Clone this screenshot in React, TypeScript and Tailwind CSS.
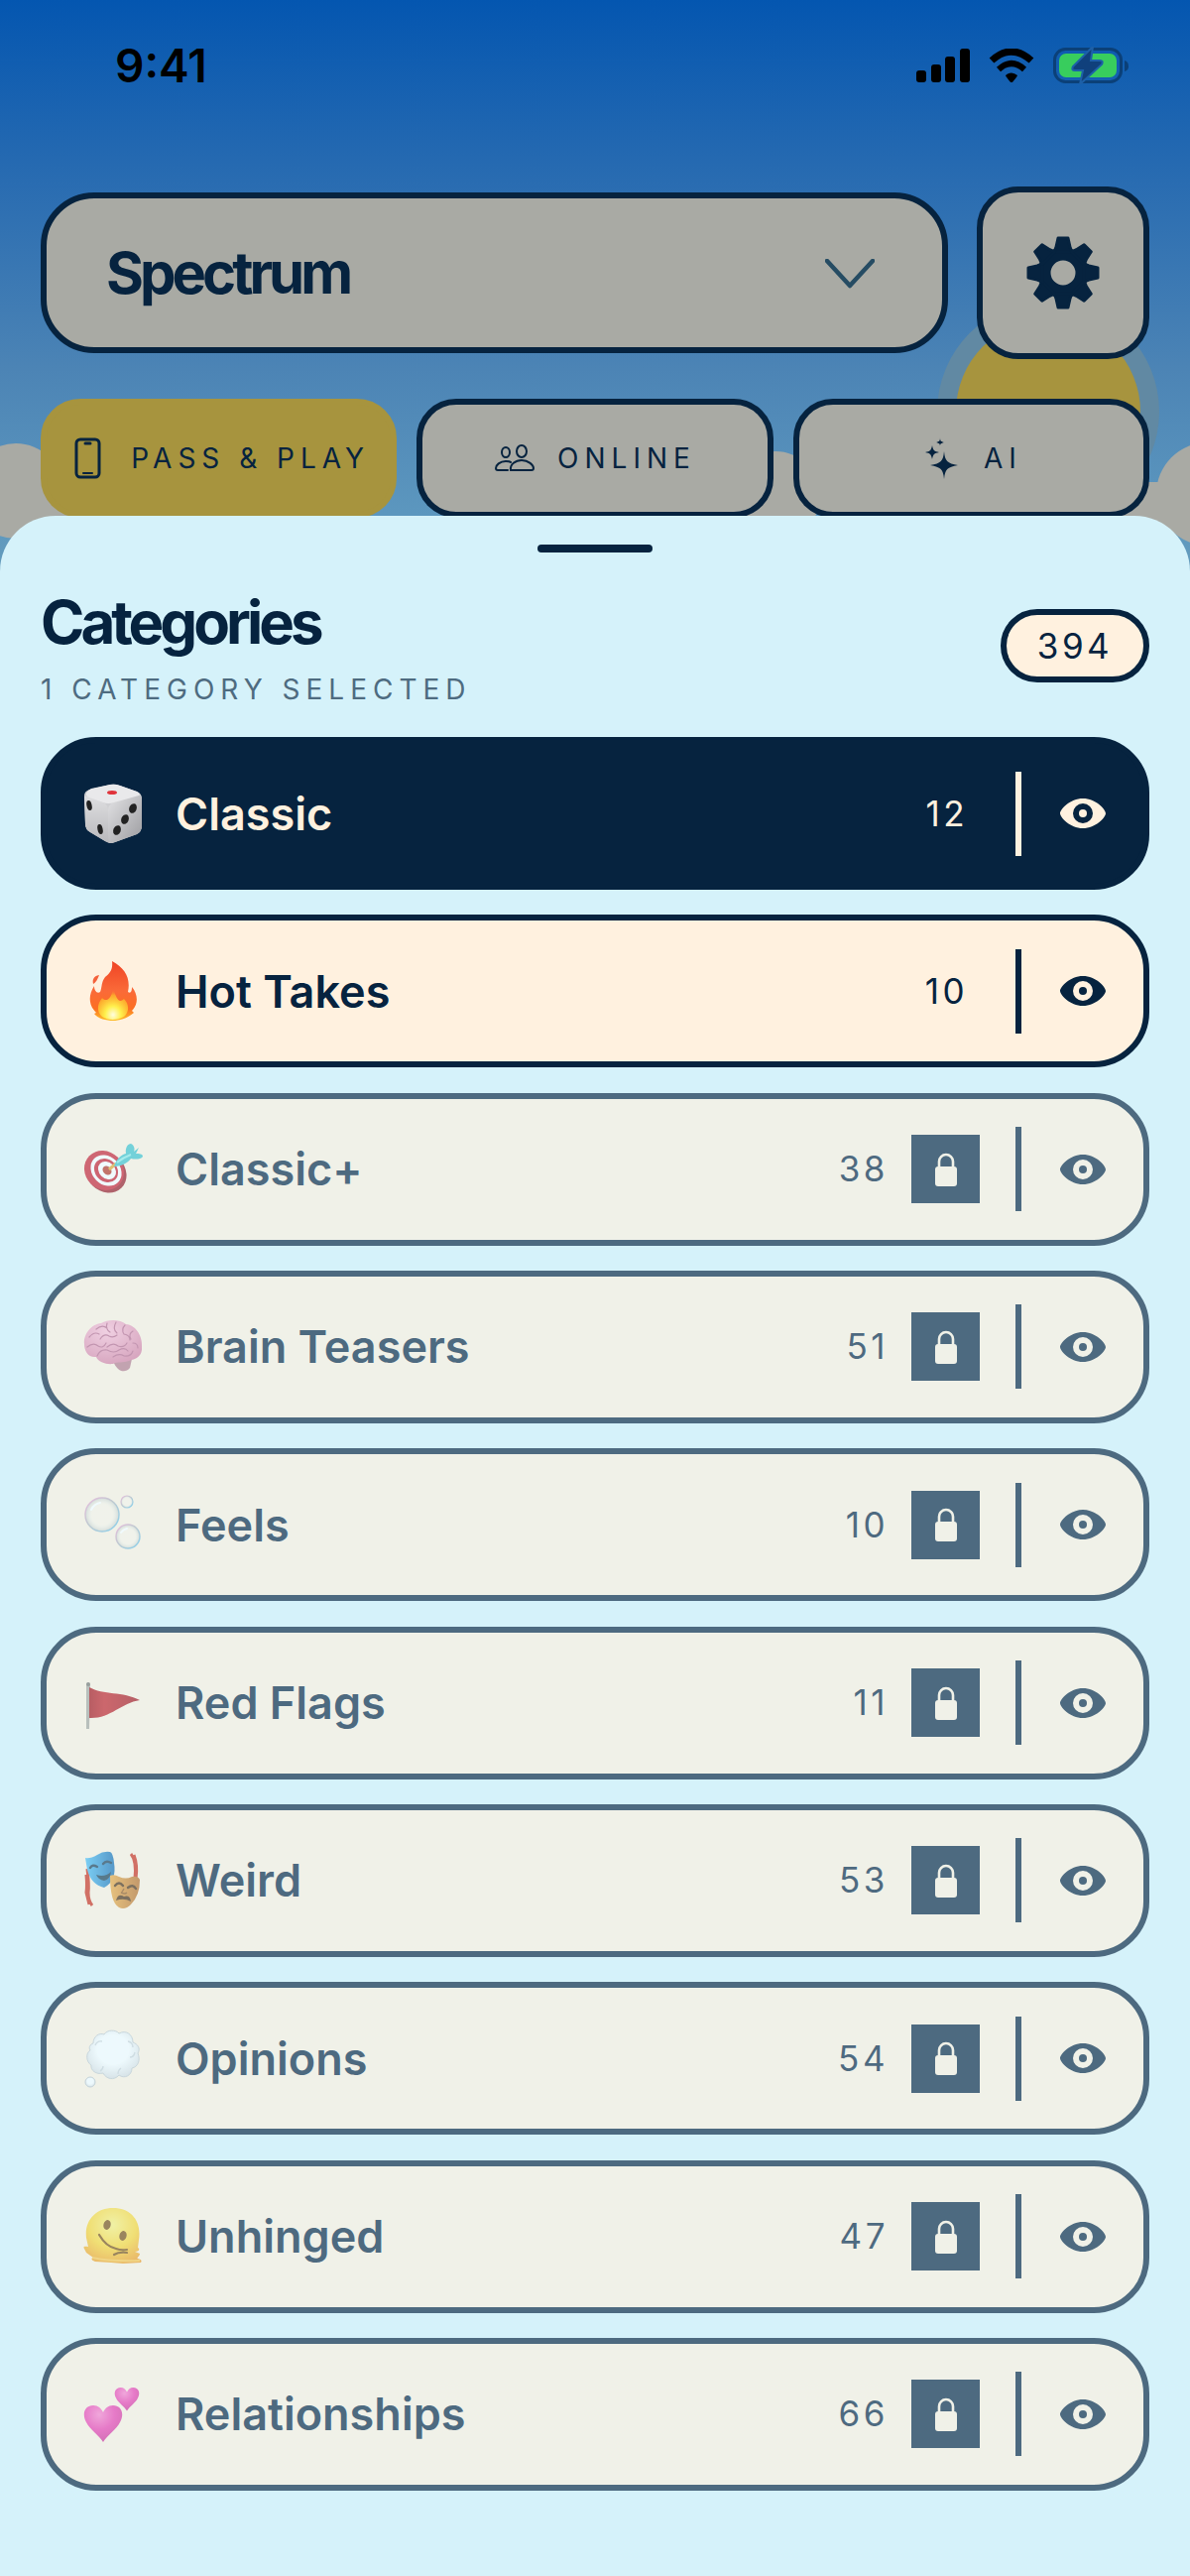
import React, { useState } from "react";

const CATEGORIES = [
  { name: "Classic", count: 12, locked: false, emoji: "dice" },
  { name: "Hot Takes", count: 10, locked: false, emoji: "fire" },
  { name: "Classic+", count: 38, locked: true, emoji: "target" },
  { name: "Brain Teasers", count: 51, locked: true, emoji: "brain" },
  { name: "Feels", count: 10, locked: true, emoji: "bubbles" },
  { name: "Red Flags", count: 11, locked: true, emoji: "flag" },
  { name: "Weird", count: 53, locked: true, emoji: "masks" },
  { name: "Opinions", count: 54, locked: true, emoji: "thought" },
  { name: "Unhinged", count: 47, locked: true, emoji: "melting" },
  { name: "Relationships", count: 66, locked: true, emoji: "hearts" },
];

const HEART =
  "M0 15 C-4 8 -14 2 -17 -5 C-22 -14 -18 -22 -10 -22 C-5 -22 -2 -19 0 -15 C2 -19 5 -22 10 -22 C18 -22 22 -14 17 -5 C14 2 4 8 0 15 Z";

const emojis = {
  dice: (
    <>
      <defs>
        <linearGradient id="diceL" x1="0" y1="0" x2="0" y2="1">
          <stop offset="0" stopColor="#dedee0" />
          <stop offset="1" stopColor="#b9b9bc" />
        </linearGradient>
        <linearGradient id="diceR" x1="0" y1="0" x2="1" y2="1">
          <stop offset="0" stopColor="#e2e2e4" />
          <stop offset="1" stopColor="#9c9ca0" />
        </linearGradient>
      </defs>
      <path d="M1 12 Q1 8 6 6 L27 1 Q32 0 37 2 L54 8 Q59 10 59 15 L59 43 Q59 48 54 51 L32 59 Q27 61 22 58 L7 49 Q2 46 2 41 Z" fill="#cfcfd2" />
      <path d="M1 13 Q3 12 7 14 L20 19 Q25 21 25 27 L26 60 Q24 59 22 58 L7 49 Q2 46 2 41 Z" fill="url(#diceL)" />
      <path d="M25 27 Q25 21 31 19 L52 12 Q58 11 59 15 L59 43 Q59 48 54 51 L32 59 Q28 61 26 60 Z" fill="url(#diceR)" />
      <path d="M3 10 Q4 7 8 5 L27 1 Q32 0 37 2 L54 8 Q58 10 56 12 L31 19 Q25 21 20 19 L6 14 Q2 12 3 10 Z" fill="#e9e9eb" />
      <ellipse cx="29" cy="9" rx="5" ry="2" fill="#e0333b" />
      <ellipse cx="6" cy="22" rx="2.6" ry="5" transform="rotate(-12 6 22)" fill="#222" />
      <ellipse cx="17" cy="46" rx="2.6" ry="5" transform="rotate(-12 17 46)" fill="#222" />
      <ellipse cx="50" cy="25" rx="3.7" ry="5" transform="rotate(22 50 25)" fill="#222" />
      <ellipse cx="42" cy="36" rx="3.7" ry="5" transform="rotate(22 42 36)" fill="#222" />
      <ellipse cx="34" cy="47" rx="3.7" ry="5" transform="rotate(22 34 47)" fill="#222" />
    </>
  ),
  fire: (
    <>
      <defs>
        <linearGradient id="fireA" x1="0" y1="0" x2="0" y2="1">
          <stop offset="0" stopColor="#ef4426" />
          <stop offset="0.5" stopColor="#fa6a38" />
          <stop offset="0.8" stopColor="#fc6f22" />
          <stop offset="1" stopColor="#fdc02a" />
        </linearGradient>
        <radialGradient id="fireB" cx="0.5" cy="0.85" r="0.75">
          <stop offset="0" stopColor="#fffde0" />
          <stop offset="0.35" stopColor="#fff04d" />
          <stop offset="0.8" stopColor="#fdb52c" stopOpacity="0.8" />
          <stop offset="1" stopColor="#fb7d30" stopOpacity="0" />
        </radialGradient>
      </defs>
      <path d="M29 0 C42 7 48 17 45 31 C48 33 49 30 49 26 C55 33 56 43 49 50 L51 52 C44 58 36 60 30 60 C23 60 15 58 11 53 L13 52 C5 44 5 34 11 25 C11 30 14 33 17 31 C19 26 18 21 22 16 C27 12 30 8 29 0 Z" fill="url(#fireA)" />
      <path d="M16 14 C14 19 13 21 10 23 C9 19 10 15 16 14 Z" fill="#f4613a" />
      <path d="M30 26 C33 38 36 43 41 38 C47 44 46 52 41 56 C34 60 25 60 19 56 C13 51 14 43 19 37 C23 42 29 38 30 26 Z" fill="url(#fireB)" />
    </>
  ),
  target: (
    <>
      <ellipse cx="23" cy="33" rx="22" ry="19" fill="#9c1620" transform="rotate(45 23 33)" />
      <ellipse cx="21" cy="31" rx="21" ry="19" fill="#cb1c2c" transform="rotate(45 21 31)" />
      <ellipse cx="23" cy="31" rx="17" ry="14" fill="#fff" transform="rotate(45 23 31)" />
      <ellipse cx="23" cy="31" rx="13" ry="11" fill="#c91b2b" transform="rotate(45 23 31)" />
      <ellipse cx="24" cy="31" rx="10" ry="8" fill="#fff" transform="rotate(45 24 31)" />
      <ellipse cx="24" cy="31" rx="5" ry="4" fill="#b8321f" transform="rotate(45 24 31)" />
      <path d="M26 30 L33 24" stroke="#e7a32b" strokeWidth="3" />
      <path d="M31 27 C33 20 38 15 43 14 C42 8 45 4 48 4 C52 6 52 10 51 12 L56 8 L53 14 C56 14 60 14 60 17 C58 20 52 20 48 19 C45 23 39 27 31 27 Z" fill="#3fc0c8" />
      <path d="M34 23 Q40 18 48 15" stroke="#8ce8e6" strokeWidth="2" fill="none" />
    </>
  ),
  brain: (
    <>
      <defs>
        <radialGradient id="brainA" cx="0.4" cy="0.25" r="0.8">
          <stop offset="0" stopColor="#ffbfd6" />
          <stop offset="1" stopColor="#d87c9f" />
        </radialGradient>
      </defs>
      <path d="M30 44 C34 55 42 57 47 51 L49 42 Z" fill="#b8798a" />
      <path d="M1 27 C0 17 8 7 18 6 C25 2 37 2 43 7 C53 8 60 19 59 30 C60 38 53 43 48 43 C43 46 36 45 32 46 C28 49 15 46 13 40 C5 41 1 34 1 27 Z" fill="url(#brainA)" />
      <path d="M6 20 q5 -6 10 -3 M13 12 q6 -5 11 -1 M24 6 q-2 6 3 9 M33 5 q-4 7 1 11 M42 8 q-4 4 -1 9 q6 1 6 6 M50 14 q-5 3 -2 8 M17 22 q4 -6 9 -3 q4 2 8 -1 M4 30 q6 -5 11 -1 q5 3 8 -3 M24 30 q6 -5 11 -1 q6 2 9 -3 M14 39 q3 -7 10 -6 q7 4 12 0 q6 -3 9 1 M30 40 q6 -4 11 -1 q7 1 9 -5 M50 26 q5 0 5 5" stroke="#b9658a" strokeWidth="1.2" fill="none" strokeLinecap="round" />
    </>
  ),
  bubbles: (
    <>
      <defs>
        <radialGradient id="bubble">
          <stop offset="0.6" stopColor="#ffffff" stopOpacity="0.15" />
          <stop offset="1" stopColor="#94a5a8" stopOpacity="0.45" />
        </radialGradient>
        <linearGradient id="bubbleRim" x1="0" y1="0" x2="1" y2="1">
          <stop offset="0" stopColor="#f3a0cf" />
          <stop offset="0.45" stopColor="#b5b4bb" />
          <stop offset="1" stopColor="#5cbfe8" />
        </linearGradient>
      </defs>
      <circle cx="19" cy="20" r="17" fill="url(#bubble)" stroke="url(#bubbleRim)" strokeWidth="1.4" />
      <circle cx="45" cy="42" r="12" fill="url(#bubble)" stroke="url(#bubbleRim)" strokeWidth="1.4" />
      <circle cx="44" cy="7" r="6" fill="url(#bubble)" stroke="url(#bubbleRim)" strokeWidth="1.2" />
      <path d="M8 15 Q11 9 17 8" stroke="#fff" strokeWidth="2" fill="none" strokeLinecap="round" />
      <path d="M38 38 Q40 35 44 34" stroke="#fff" strokeWidth="2" fill="none" strokeLinecap="round" />
    </>
  ),
  flag: (
    <>
      <defs>
        <linearGradient id="flagA" x1="0" x2="1">
          <stop offset="0" stopColor="#a80f14" />
          <stop offset="0.3" stopColor="#c81e22" />
          <stop offset="1" stopColor="#a51218" />
        </linearGradient>
      </defs>
      <path d="M3 11 Q4 8 7 11 L6 56 L3 56 Z" fill="#a9a59b" />
      <circle cx="5" cy="11" r="2" fill="#77736c" />
      <path d="M6 14 C20 22 40 18 57 27 C38 30 27 46 6 45 Z" fill="url(#flagA)" />
    </>
  ),
  masks: (
    <>
      <defs>
        <linearGradient id="maskA" x1="0" x2="1">
          <stop offset="0" stopColor="#4cbcf2" />
          <stop offset="1" stopColor="#1469ae" />
        </linearGradient>
        <linearGradient id="maskB" x1="0" x2="1">
          <stop offset="0" stopColor="#f0a83c" />
          <stop offset="1" stopColor="#b9691f" />
        </linearGradient>
      </defs>
      <path d="M4 18 Q6 34 5 42 Q5 50 9 55 M3 24 Q4 36 3 42 L6 54 M48 3 Q54 10 52 28 M51 4 Q55 14 53 28" stroke="#cf2c17" strokeWidth="3" fill="none" />
      <path d="M2 7 Q7 8 14 4 Q20 0 27 1 Q30 2 31 12 Q34 30 21 37 Q8 34 4 19 Z" fill="url(#maskA)" />
      <path d="M7 17 Q9 13 14 16 M20 13 Q23 9 28 12" stroke="#173a54" strokeWidth="2.4" fill="none" strokeLinecap="round" />
      <path d="M13 24 Q22 27 28 21 Q27 29 21 30 Q15 29 13 24 Z" fill="#16394f" />
      <path d="M27 25 Q31 23 36 26 Q43 29 49 26 Q55 25 57 29 Q57 45 48 54 Q42 60 36 57 Q27 52 27 25 Z" fill="url(#maskB)" />
      <path d="M32 35 Q36 30 40 35 M45 37 Q50 33 53 38" stroke="#4d2c0d" strokeWidth="2.4" fill="none" strokeLinecap="round" />
      <path d="M33 50 Q35 42 41 46 Q47 44 48 51 Q41 47 33 50 Z" fill="#4d2c0d" />
      <path d="M41 38 q-2 4 -3 4 q4 2 6 0" stroke="#91551a" strokeWidth="1.4" fill="none" />
    </>
  ),
  thought: (
    <>
      <defs>
        <radialGradient id="cloudA" cx="0.5" cy="0.4" r="0.6">
          <stop offset="0.5" stopColor="#fbfeff" />
          <stop offset="1" stopColor="#d9dcdf" />
        </radialGradient>
      </defs>
      <path d="M10 15 C10 8 16 4 21 6 C24 1 33 1 36 5 C43 1 50 6 50 14 C55 16 58 20 55 25 C58 32 55 39 49 40 C49 48 41 51 36 47 C31 53 23 51 20 45 C13 47 7 42 8 37 C3 34 2 25 7 22 C5 19 7 16 10 15 Z" fill="url(#cloudA)" stroke="#c3c9cd" strokeWidth="1" />
      <path d="M45 13 Q50 14 50 19 M52 24 Q51 29 47 29 M17 43 Q20 41 20 38 M35 46 Q35 42 38 40 M12 17 Q14 12 19 13" stroke="#cdd3d8" strokeWidth="1.4" fill="none" />
      <circle cx="7" cy="54" r="5" fill="url(#cloudA)" stroke="#bcc3c8" strokeWidth="1" />
    </>
  ),
  melting: (
    <>
      <defs>
        <radialGradient id="meltA" cx="0.5" cy="0.3" r="0.75">
          <stop offset="0" stopColor="#fff17a" />
          <stop offset="0.55" stopColor="#ffd52e" />
          <stop offset="1" stopColor="#f59a1c" />
        </radialGradient>
      </defs>
      <path d="M3 31 C1 13 13 1 30 1 C48 1 59 14 56 33 L55 41 C57 42 57 45 52 45 L57 47 C57 50 53 51 55 52 Q60 53 58 56 L40 57 L28 56 L12 55 Q6 53 10 51 L3 46 L1 42 C-1 39 3 40 5 40 Z" fill="url(#meltA)" />
      <path d="M9 51 Q28 55 57 54" stroke="#ffc648" strokeWidth="2" fill="none" />
      <path d="M16 28 Q23 40 33 42 Q38 44 44 43 M31 48 Q36 45 44 46" stroke="#7b4b0c" strokeWidth="2.2" fill="none" strokeLinecap="round" />
      <ellipse cx="24" cy="18" rx="3.6" ry="5" transform="rotate(15 24 18)" fill="#7b4b0c" />
      <ellipse cx="40" cy="29" rx="3.6" ry="5" transform="rotate(15 40 29)" fill="#7b4b0c" />
    </>
  ),
  hearts: (
    <>
      <defs>
        <radialGradient id="heartA" cx="0.4" cy="0.25" r="0.8">
          <stop offset="0" stopColor="#ff7fcb" />
          <stop offset="0.5" stopColor="#f03cae" />
          <stop offset="1" stopColor="#cf2a8f" />
        </radialGradient>
      </defs>
      <path d={HEART} transform="translate(20 43)" fill="url(#heartA)" />
      <path d={HEART} transform="translate(44 17) scale(0.64)" fill="url(#heartA)" />
    </>
  ),
};

const Emoji = ({ name }) => (
  <svg viewBox="0 0 60 60" className="h-[60px] w-[60px] shrink-0" aria-hidden="true">
    {emojis[name]}
  </svg>
);

const EyeIcon = () => (
  <svg viewBox="0 0 46 30" className="h-[30px] w-[46px]" fill="currentColor" aria-hidden="true">
    <path
      fillRule="evenodd"
      d="M0 15 C0 11 10 0 23 0 C36 0 46 11 46 15 C46 19 36 30 23 30 C10 30 0 19 0 15 Z M23 5 A10 10 0 1 0 23 25 A10 10 0 1 0 23 5 Z"
    />
    <circle cx="23" cy="15" r="4" />
  </svg>
);

const LockIcon = () => (
  <svg viewBox="0 0 22 34" className="h-[34px] w-[22px]" aria-hidden="true">
    <rect x="0" y="14" width="22" height="20" rx="3" fill="currentColor" />
    <path d="M4 16 V9 A7 7 0 0 1 18 9 V16" fill="none" stroke="currentColor" strokeWidth="2.6" />
  </svg>
);

const GearIcon = () => (
  <svg viewBox="-37 -37 74 74" className="h-[74px] w-[74px]" aria-hidden="true">
    <circle r="19" fill="none" stroke="currentColor" strokeWidth="13" />
    {[0, 45, 90, 135, 180, 225, 270, 315].map((angle) => (
      <path
        key={angle}
        d="M-9 -21 L-7 -26 L-5 -35 L5 -35 L7 -26 L9 -21 Z"
        transform={`rotate(${angle})`}
        fill="currentColor"
        stroke="currentColor"
        strokeWidth="3"
        strokeLinejoin="round"
      />
    ))}
  </svg>
);

const PhoneIcon = () => (
  <svg viewBox="0 0 42 42" className="h-[42px] w-[42px]" fill="none" stroke="currentColor" aria-hidden="true">
    <rect x="9" y="2" width="23" height="38" rx="4" strokeWidth="3" />
    <path d="M18 6 H23" strokeWidth="3" strokeLinecap="round" />
    <path d="M16 36 H25" strokeWidth="2" strokeLinecap="round" />
  </svg>
);

const PeopleIcon = () => (
  <svg viewBox="0 0 42 42" className="h-[42px] w-[42px]" fill="none" stroke="currentColor" strokeWidth="2" strokeLinecap="round" aria-hidden="true">
    <ellipse cx="12" cy="15" rx="4" ry="5" />
    <ellipse cx="28" cy="14" rx="5" ry="6" />
    <path d="M17 33 C16 27 22 23 28 23 C35 23 40 28 40 31 C40 33 39 33 38 33 H19 C17 33 17 33 17 33 Z" />
    <path d="M14 33 H4 C2 33 2 32 2 31 C2 28 6 24 12 24 C14 24 16 24 17 25" />
  </svg>
);

const SparkleIcon = () => (
  <svg viewBox="0 0 42 42" className="h-[42px] w-[42px]" fill="currentColor" aria-hidden="true">
    <path d="M24 14 C25 24 27 26 38 28 C27 30 25 32 24 42 C23 32 21 30 10 28 C21 26 23 24 24 14 Z" />
    <path d="M12 8 C13 13 14 14 19 15 C14 16 13 17 12 22 C11 17 10 16 5 15 C10 14 11 13 12 8 Z" />
    <path d="M20 0 C20 4 21 4 24 5 C21 6 20 6 20 9 C20 6 19 6 16 5 C19 4 20 4 20 0 Z" />
  </svg>
);

const MODES = [
  { label: "PASS & PLAY", Icon: PhoneIcon },
  { label: "ONLINE", Icon: PeopleIcon },
  { label: "AI", Icon: SparkleIcon },
];

// sun and clouds behind the header, already dimmed by the open sheet
const Sky = () => (
  <svg
    viewBox="0 0 1200 620"
    preserveAspectRatio="xMidYMin slice"
    className="absolute inset-x-0 top-0 h-[620px] w-full"
    aria-hidden="true"
  >
    <defs>
      <linearGradient id="sky" x1="0" y1="0" x2="0" y2="1">
        <stop offset="0" stopColor="#0456b0" />
        <stop offset="0.27" stopColor="#266ab1" />
        <stop offset="0.6" stopColor="#4c84b5" />
        <stop offset="0.85" stopColor="#5d98bf" />
        <stop offset="1" stopColor="#6b9fb8" />
      </linearGradient>
    </defs>
    <rect width="1200" height="620" fill="url(#sky)" />
    <circle cx="1057" cy="415" r="112" fill="#6189a3" />
    <circle cx="1057" cy="415" r="93" fill="#a7943e" />
    <g fill="#a9aaa4">
      <circle cx="16" cy="495" r="48" />
      <rect x="-40" y="490" width="150" height="47" rx="20" />
      <circle cx="782" cy="500" r="45" />
      <circle cx="1218" cy="498" r="52" />
      <rect x="1110" y="486" width="130" height="51" rx="24" />
    </g>
  </svg>
);

const StatusBar = () => (
  <div className="flex h-[131px] items-center justify-between pl-[116px] pr-[61px] text-black">
    <span className="text-[46px] font-semibold leading-none">9:41</span>
    <div className="flex items-center gap-[19px]">
      <svg viewBox="0 0 54 34" className="h-[34px] w-[54px]" aria-hidden="true">
        <rect x="0" y="22" width="10" height="12" rx="3" />
        <rect x="15" y="16" width="10" height="18" rx="3" />
        <rect x="29" y="8" width="10" height="26" rx="3" />
        <rect x="44" y="0" width="10" height="34" rx="3" />
      </svg>
      <svg viewBox="0 0 46 34" className="h-[34px] w-[46px]" aria-hidden="true">
        <path d="M3 12 Q23 -6 43 12" fill="none" stroke="#000" strokeWidth="7" />
        <path d="M10 21 Q23 9 36 21" fill="none" stroke="#000" strokeWidth="6" />
        <path d="M17 27 Q23 22 29 27 Q29 28 23 35 Q17 28 17 27 Z" />
      </svg>
      <svg viewBox="0 0 77 38" className="h-[38px] w-[77px]" aria-hidden="true">
        <rect x="1.5" y="2.5" width="67" height="33" rx="11" fill="none" stroke="#0b4078" strokeWidth="3" />
        <rect x="6" y="7" width="58" height="24" rx="7" fill="#38cd5d" />
        <path d="M72 14 Q76 15 76 20 Q76 24 72 25 Z" fill="#0b4078" />
        <path
          d="M40 0 L20 20 Q18 24 22 24 L30 24 L27 38 L49 18 Q51 14 47 14 L38 14 Z"
          fill="#10407c"
          stroke="#1d60a8"
          strokeWidth="2"
        />
      </svg>
    </div>
  </div>
);

const CategoryRow = ({ category, selected, onToggle }) => {
  const { name, count, locked, emoji } = category;

  return (
    <li
      className={`flex h-[154px] items-center rounded-[56px] border-[6px] border-[#06233f] ${
        selected ? "bg-[#06233f] text-[#fff1df]" : "bg-[#fff1df] text-[#06233f]"
      } ${locked ? "opacity-65" : ""}`}
    >
      <button
        type="button"
        aria-pressed={selected}
        onClick={onToggle}
        className={`flex h-full min-w-0 flex-1 items-center pl-[37px] text-left ${
          locked ? "pr-9" : "pr-12"
        }`}
      >
        <Emoji name={emoji} />
        <span className="ml-[33px] flex-1 text-[45px] font-semibold leading-none">{name}</span>
        <span className="text-[35px] leading-none tracking-widest">{count}</span>
        {locked && (
          <span className="ml-[23px] flex h-[69px] w-[69px] items-center justify-center bg-[#06233f] text-[#fff1df]">
            <LockIcon />
          </span>
        )}
      </button>
      <span className="h-[85px] w-[6px] bg-current" />
      <button
        type="button"
        aria-label={`Preview ${name}`}
        className="flex h-full w-[123px] items-center justify-center"
      >
        <EyeIcon />
      </button>
    </li>
  );
};

export default function App() {
  const [mode, setMode] = useState("PASS & PLAY");
  const [selected, setSelected] = useState(["Classic"]);

  const toggleCategory = (category) => {
    if (category.locked) return;
    setSelected((prev) =>
      prev.includes(category.name)
        ? prev.filter((n) => n !== category.name)
        : [...prev, category.name]
    );
  };

  return (
    <div className="relative flex min-h-screen flex-col font-['Inter',sans-serif] text-[#06233f]">
      <Sky />
      <header className="relative">
        <StatusBar />
        <div className="mt-[57px] flex items-center gap-[29px] px-[41px]">
          <div className="relative flex-1">
            <select
              aria-label="Game"
              className="h-[162px] w-full appearance-none rounded-[54px] border-[6px] border-[#06233f] bg-[#a9aaa4] pl-[60px] text-[58px] font-bold tracking-[-4px]"
            >
              <option>Spectrum</option>
            </select>
            <svg
              viewBox="0 0 50 30"
              className="pointer-events-none absolute right-[74px] top-[67px] h-[30px] w-[50px]"
              aria-hidden="true"
            >
              <path
                d="M2 2 L25 27 L48 2"
                fill="none"
                stroke="#264c63"
                strokeWidth="4.5"
                strokeLinecap="round"
                strokeLinejoin="round"
              />
            </svg>
          </div>
          <button
            type="button"
            aria-label="Settings"
            className="flex h-[174px] w-[174px] items-center justify-center rounded-[42px] border-[6px] border-[#06233f] bg-[#a9aaa4]"
          >
            <GearIcon />
          </button>
        </div>
        <div className="mt-10 grid grid-cols-3 gap-5 px-[41px]">
          {MODES.map(({ label, Icon }) => (
            <button
              key={label}
              type="button"
              aria-pressed={mode === label}
              onClick={() => setMode(label)}
              className={`flex h-[120px] items-center justify-center gap-[22px] rounded-[40px] border-[6px] text-[28px] tracking-[6px] ${
                mode === label
                  ? "border-[#a7943e] bg-[#a7943e]"
                  : "border-[#06233f] bg-[#a9aaa4]"
              }`}
            >
              <Icon />
              <span className="whitespace-nowrap">{label}</span>
            </button>
          ))}
        </div>
      </header>

      <main className="relative -mt-[2px] flex flex-1 flex-col rounded-t-[56px] bg-[#d5f2fa] px-[41px] pb-[86px] pt-[29px]">
        <div className="h-2 w-[116px] self-center rounded-full bg-[#06233f]" />
        <div className="mt-[34px] flex items-center justify-between">
          <div>
            <h1 className="text-[60px] font-bold leading-[72px] tracking-[-4px]">Categories</h1>
            <p className="mt-4 text-[28px] leading-[32px] tracking-[6px] text-[#4e6b80]">
              {selected.length} {selected.length === 1 ? "CATEGORY" : "CATEGORIES"} SELECTED
            </p>
          </div>
          <span className="flex h-[74px] w-[150px] items-center justify-center rounded-full border-[6px] border-[#06233f] bg-[#fff1df] text-[35px] tracking-widest">
            394
          </span>
        </div>
        <ul className="mt-8 flex flex-1 flex-col justify-between">
          {CATEGORIES.map((category) => (
            <CategoryRow
              key={category.name}
              category={category}
              selected={selected.includes(category.name)}
              onToggle={() => toggleCategory(category)}
            />
          ))}
        </ul>
      </main>
    </div>
  );
}
